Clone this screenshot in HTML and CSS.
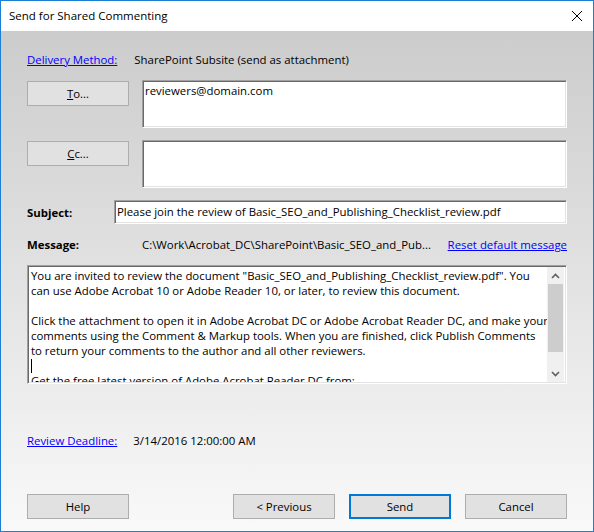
FILE: index.html
```html
<!DOCTYPE html>
<html>
<head>
<meta charset="utf-8">
<link rel="stylesheet" href="styles.css">
</head>
<body>
<div class="window">
  <div class="titlebar">
    <span class="title">Send for Shared Commenting</span>
    <svg class="close" width="12" height="12" viewBox="0 0 12 12"><path d="M1 1L11 11M11 1L1 11" stroke="#000" stroke-width="1" fill="none"/></svg>
  </div>
  <div class="content">
    <div class="delivery">
      <a class="link">Delivery Method:</a>
      <span class="delivery-value">SharePoint Subsite (send as attachment)</span>
    </div>
    <div class="recip">
      <button class="btn small-top"><u>T</u>o...</button>
      <div class="field tall">reviewers@domain.com</div>
    </div>
    <div class="recip">
      <button class="btn small-top"><u>C</u>c...</button>
      <div class="field tall"></div>
    </div>
    <div class="subject">
      <span class="bold label-subject">Subject:</span>
      <div class="field short">Please join the review of Basic_SEO_and_Publishing_Checklist_review.pdf</div>
    </div>
    <div class="message-row">
      <span class="bold label-message">Message:</span>
      <span class="path">C:\Work\Acrobat_DC\SharePoint\Basic_SEO_and_Pub...</span>
      <a class="link">Reset default message</a>
    </div>
    <div class="msgbox">
      <div class="msgtext">You are invited to review the document "Basic_SEO_and_Publishing_Checklist_review.pdf". You<br>can use Adobe Acrobat 10 or Adobe Reader 10, or later, to review this document.<br><br>Click the attachment to open it in Adobe Acrobat DC or Adobe Acrobat Reader DC, and make your<br>comments using the Comment &amp; Markup tools. When you are finished, click Publish Comments<br>to return your comments to the author and all other reviewers.<br><span class="caret"></span><br>Get the free latest version of Adobe Acrobat Reader DC from:</div>
      <div class="scrollbar">
        <div class="arrow"><svg width="9" height="6" viewBox="0 0 9 6"><path d="M1 5L4.5 1.5L8 5" stroke="#606060" stroke-width="1.6" fill="none"/></svg></div>
        <div class="thumb"></div>
        <div class="track"></div>
        <div class="arrow"><svg width="9" height="6" viewBox="0 0 9 6"><path d="M1 1L4.5 4.5L8 1" stroke="#606060" stroke-width="1.6" fill="none"/></svg></div>
      </div>
    </div>
    <div class="deadline">
      <a class="link">Review Deadline:</a>
      <span class="deadline-value">3/14/2016 12:00:00 AM</span>
    </div>
    <div class="buttons">
      <button class="btn">Help</button>
      <div class="spacer"></div>
      <button class="btn">&lt; Previous</button>
      <button class="btn default">Send</button>
      <button class="btn">Cancel</button>
    </div>
  </div>
</div>
</body>
</html>
```
FILE: styles.css
```css
* { box-sizing: border-box; }
html, body { margin: 0; padding: 0; }
body {
  font-family: "Open Sans", "Noto Sans", sans-serif;
  font-size: 11.4px;
  color: #000;
}
.window {
  width: 594px;
  height: 532px;
  border: 1px solid #1a7fd5;
  display: flex;
  flex-direction: column;
  background: #fff;
}
.titlebar {
  height: 30px;
  flex: none;
  background: #fff;
  display: flex;
  align-items: center;
  padding: 0 10px 0 8px;
}
.title { font-size: 11.5px; flex: 1; padding-bottom: 1px; }
.close { display: block; }
.content {
  flex: 1;
  background: linear-gradient(to bottom, #cccccc, #f9f9f9);
  padding: 0 26px;
  display: flex;
  flex-direction: column;
}
.link { color: #0000ff; text-decoration: underline; cursor: pointer; }
.bold { font-weight: bold; }
.delivery {
  margin-top: 21px;
  line-height: 16px;
  display: flex;
}
.delivery-value { margin-left: 17px; }
.recip {
  margin-top: 12px;
  display: flex;
  gap: 13px;
}
.btn {
  font-family: inherit;
  font-size: 11.4px;
  width: 102px;
  height: 25px;
  background: #e1e1e1;
  border: 1px solid #adadad;
  color: #000;
  padding: 0;
  flex: none;
}
.btn.small-top { margin-top: 1px; }
.btn.default { border: 2px solid #0078d7; }
.field {
  background: #fff;
  border: 1px solid;
  border-color: #a0a0a0 #fff #fff #a0a0a0;
  box-shadow: inset 1px 1px 0 #696969, inset -1px -1px 0 #e3e3e3;
  padding: 1px 2px;
  line-height: 16px;
  flex: 1;
  white-space: nowrap;
  overflow: hidden;
}
.field.tall { height: 48px; padding-top: 2px; }
.field.short { height: 24px; padding-top: 3px; }
.subject {
  margin-top: 12px;
  display: flex;
  align-items: center;
}
.label-subject { width: 87px; flex: none; }
.message-row {
  margin-top: 13px;
  line-height: 16px;
  display: flex;
}
.label-message { width: 115px; flex: none; }
.path { flex: 1; }
.msgbox {
  margin-top: 12px;
  height: 119px;
  background: #fff;
  border: 1px solid;
  border-color: #a0a0a0 #fff #fff #a0a0a0;
  box-shadow: inset 1px 1px 0 #696969, inset -1px -1px 0 #e3e3e3;
  padding: 1px 2px 1px 1px;
  display: flex;
}
.msgtext {
  flex: 1;
  padding: 1px 0 0 2px;
  line-height: 15px;
  white-space: nowrap;
  overflow: hidden;
}
.caret {
  display: inline-block;
  width: 1px;
  height: 14px;
  background: #000;
  vertical-align: -3px;
}
.scrollbar {
  width: 17px;
  flex: none;
  background: #f0f0f0;
  display: flex;
  flex-direction: column;
}
.arrow {
  height: 17px;
  display: flex;
  align-items: center;
  justify-content: center;
}
.arrow svg { display: block; }
.thumb { height: 68px; margin: 0 1px; background: #cdcdcd; }
.track { flex: 1; }
.deadline {
  margin-top: 49px;
  line-height: 16px;
  display: flex;
}
.deadline-value { margin-left: 16px; }
.buttons {
  margin-top: 45px;
  display: flex;
  gap: 14px;
}
.spacer { flex: 1; }
```
